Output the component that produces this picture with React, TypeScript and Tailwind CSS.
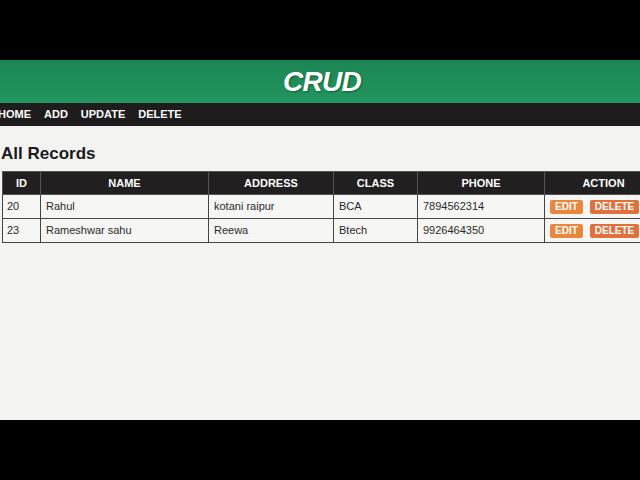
import React from 'react';

type Row = { id: number; name: string; address: string; cls: string; phone: string };

const rows: Row[] = [
    { id: 20, name: 'Rahul', address: 'kotani raipur', cls: 'BCA', phone: '7894562314' },
    { id: 23, name: 'Rameshwar sahu', address: 'Reewa', cls: 'Btech', phone: '9926464350' },
];

const cols = [
    { label: 'ID', w: 'w-[38px]' },
    { label: 'NAME', w: 'w-[168px]' },
    { label: 'ADDRESS', w: 'w-[125px]' },
    { label: 'CLASS', w: 'w-[84px]' },
    { label: 'PHONE', w: 'w-[127px]' },
    { label: 'ACTION', w: 'w-[118px]' },
];

const App: React.FC = () => {
    return (
        <div className="w-[640px] h-[480px] bg-black flex flex-col overflow-hidden font-['Liberation_Sans',Arial,sans-serif]">
            <div className="h-[60px] shrink-0" />

            <div className="h-[360px] shrink-0 bg-[#f3f3f2] flex flex-col overflow-hidden">
                {/* Header */}
                <div className="h-[43px] shrink-0 bg-gradient-to-b from-[#1b8655] to-[#23955f] flex items-center justify-center">
                    <h1 className="text-[28px] font-bold italic text-white tracking-tight [text-shadow:1px_1px_2px_rgba(0,0,0,0.35)] ml-[4px]">
                        CRUD
                    </h1>
                </div>

                {/* Nav */}
                <nav className="h-[23px] shrink-0 bg-[#1e1c1d] flex items-center gap-[13px] -ml-[2px] text-[11px] font-bold text-white">
                    <a>HOME</a>
                    <a>ADD</a>
                    <a>UPDATE</a>
                    <a>DELETE</a>
                </nav>

                <div className="pt-[18px] pl-[1px]">
                    <h2 className="text-[17px] font-semibold text-[#1a1a1a] leading-[20px]">All Records</h2>

                    <table className="mt-[7px] ml-[1px] w-[660px] border-collapse text-[11px] text-[#2a2a2a] table-fixed">
                        <thead>
                            <tr className="bg-[#221f20] text-white h-[23px]">
                                {cols.map((c) => (
                                    <th key={c.label} className={`${c.w} border border-[#555] font-bold text-[11px] text-center`}>
                                        {c.label}
                                    </th>
                                ))}
                            </tr>
                        </thead>
                        <tbody>
                            {rows.map((r) => (
                                <tr key={r.id} className="h-[24px] bg-[#f6f6f5]">
                                    <td className="border border-[#444] px-[4px]">{r.id}</td>
                                    <td className="border border-[#444] px-[5px]">{r.name}</td>
                                    <td className="border border-[#444] px-[5px]">{r.address}</td>
                                    <td className="border border-[#444] px-[5px]">{r.cls}</td>
                                    <td className="border border-[#444] px-[5px]">{r.phone}</td>
                                    <td className="border border-[#444] px-[5px]">
                                        <div className="flex items-center gap-[7px]">
                                            <button className="bg-[#e9873f] text-white text-[10px] font-bold px-[5px] h-[14px] leading-[14px] rounded-[2px]">
                                                EDIT
                                            </button>
                                            <button className="bg-[#e0703c] text-white text-[10px] font-bold px-[5px] h-[14px] leading-[14px] rounded-[2px]">
                                                DELETE
                                            </button>
                                        </div>
                                    </td>
                                </tr>
                            ))}
                        </tbody>
                    </table>
                </div>
            </div>

            <div className="flex-1" />
        </div>
    );
};

export default App;
